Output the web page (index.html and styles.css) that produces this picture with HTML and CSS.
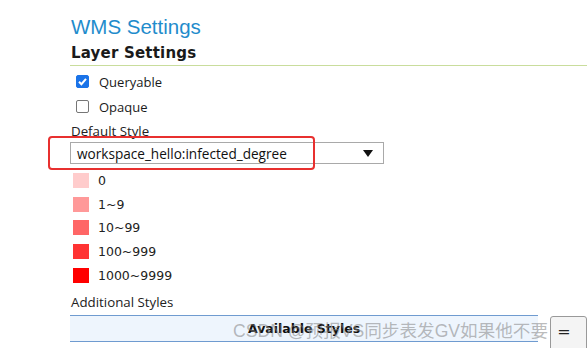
FILE: index.html
```html
<!DOCTYPE html>
<html>
<head>
<meta charset="utf-8">
<link rel="stylesheet" href="styles.css">
</head>
<body>
<div class="page">
  <h1 class="title">WMS Settings</h1>
  <h2 class="section">Layer Settings</h2>
  <ul class="checks">
    <li><span class="cb checked"><svg viewBox="0 0 13 13" width="13" height="13"><path d="M3 6.8 L5.4 9.2 L10 3.8" fill="none" stroke="#fff" stroke-width="2"/></svg></span><span class="cl">Queryable</span></li>
    <li><span class="cb"></span><span class="cl">Opaque</span></li>
  </ul>
  <div class="field">
    <div class="label">Default Style</div>
    <div class="select-wrap">
      <div class="select"><span class="sv">workspace_hello:infected_degree</span><span class="arrow"></span></div>
      <div class="annot"></div>
    </div>
  </div>
  <ul class="legend">
    <li><span class="sw c1"></span><span class="lt">0</span></li>
    <li><span class="sw c2"></span><span class="lt">1~9</span></li>
    <li><span class="sw c3"></span><span class="lt">10~99</span></li>
    <li><span class="sw c4"></span><span class="lt">100~999</span></li>
    <li><span class="sw c5"></span><span class="lt">1000~9999</span></li>
  </ul>
  <div class="label add">Additional Styles</div>
  <div class="tablerow">
    <div class="thead">Available Styles</div>
    <div class="btn">=</div>
  </div>
</div>
<div class="watermark">CSDN @预报VS同步表发GV如果他不要</div>
</body>
</html>
```

FILE: styles.css
```css
html, body {
  margin: 0;
  padding: 0;
  background: #fff;
}
body {
  font-family: "DejaVu Sans", Verdana, sans-serif;
  color: #222;
  width: 587px;
  height: 348px;
  overflow: hidden;
  position: relative;
}
.page {
  padding: 13px 0 0 70px;
}
.title {
  margin: 0 0 0 1px;
  font-family: "Liberation Sans", Arial, sans-serif;
  font-weight: 400;
  font-size: 20.5px;
  line-height: 28px;
  color: #1f8ccc;
}
.section {
  margin: 0;
  padding: 2px 0 0 1px;
  font-family: "DejaVu Sans", Verdana, sans-serif;
  font-weight: 700;
  font-size: 15px;
  line-height: 20px;
  color: #1a1a1a;
  border-bottom: 1px solid #c9dd9c;
  letter-spacing: 0.2px;
  height: 22px;
}
.checks {
  list-style: none;
  margin: 0;
  padding: 3px 0 0 6px;
}
.checks li {
  display: flex;
  align-items: center;
  height: 25px;
}
.cb {
  width: 11px;
  height: 11px;
  border: 1px solid #767676;
  border-radius: 2px;
  margin-right: 10px;
  display: flex;
  box-sizing: content-box;
}
.cb.checked {
  background: #1a73e8;
  border-color: #1a73e8;
}
.cb svg {
  margin: -1px;
}
.cl {
  font-family: "Open Sans", "Noto Sans", sans-serif;
  font-size: 13px;
  color: #1a1a1a;
}
.field {
  margin-top: 4px;
}
.label {
  font-family: "Open Sans", "Noto Sans", sans-serif;
  font-size: 13.3px;
  line-height: 16px;
  color: #222;
  padding-left: 1px;
}
.select-wrap {
  position: relative;
  margin-top: 3px;
  width: 314px;
}
.select {
  height: 20px;
  border: 1px solid #a9a9a9;
  display: flex;
  align-items: center;
  justify-content: space-between;
  padding: 0 10px 0 6px;
}
.sv {
  font-family: "Open Sans", "Noto Sans", sans-serif;
  font-size: 13.6px;
  color: #111;
}
.arrow {
  width: 0;
  height: 0;
  border-left: 5px solid transparent;
  border-right: 5px solid transparent;
  border-top: 7px solid #111;
}
.annot {
  position: absolute;
  left: -22px;
  top: -6px;
  width: 263px;
  height: 30px;
  border: 2px solid #e8302f;
  border-radius: 4px;
}
.legend {
  list-style: none;
  margin: 0;
  padding: 5px 0 0 3px;
}
.legend li {
  display: flex;
  align-items: center;
  height: 23.6px;
}
.sw {
  width: 16px;
  height: 15px;
  margin-right: 9px;
}
.c1 { background: #ffcccc; }
.c2 { background: #ff9999; }
.c3 { background: #ff6666; }
.c4 { background: #ff3333; }
.c5 { background: #ff0000; }
.lt {
  font-family: "DejaVu Sans", Verdana, sans-serif;
  font-size: 12.5px;
  color: #222;
}
.label.add {
  margin-top: 7px;
}
.tablerow {
  display: flex;
  margin-top: 5px;
  align-items: flex-start;
}
.thead {
  width: 487px;
  height: 25px;
  background: #eef5fd;
  border-top: 1px solid #6f9bd0;
  border-bottom: 1px solid #6f9bd0;
  text-align: center;
  font-family: "DejaVu Sans", Verdana, sans-serif;
  font-weight: 700;
  font-size: 12.5px;
  line-height: 25px;
  color: #111;
}
.btn {
  position: relative;
  z-index: 2;
  margin-left: 12px;
  margin-top: 1px;
  width: 30px;
  height: 34px;
  border: 1px solid #999;
  border-radius: 3px;
  background: #f4f4f4;
  font-size: 16px;
  line-height: 30px;
  padding-left: 6px;
  color: #222;
}
.watermark {
  position: absolute;
  z-index: 1;
  left: 233px;
  top: 317px;
  font-family: "Liberation Sans", "Noto Sans CJK SC", sans-serif;
  font-size: 17.6px;
  color: rgba(130, 130, 130, 0.55);
  white-space: nowrap;
  pointer-events: none;
}
```
